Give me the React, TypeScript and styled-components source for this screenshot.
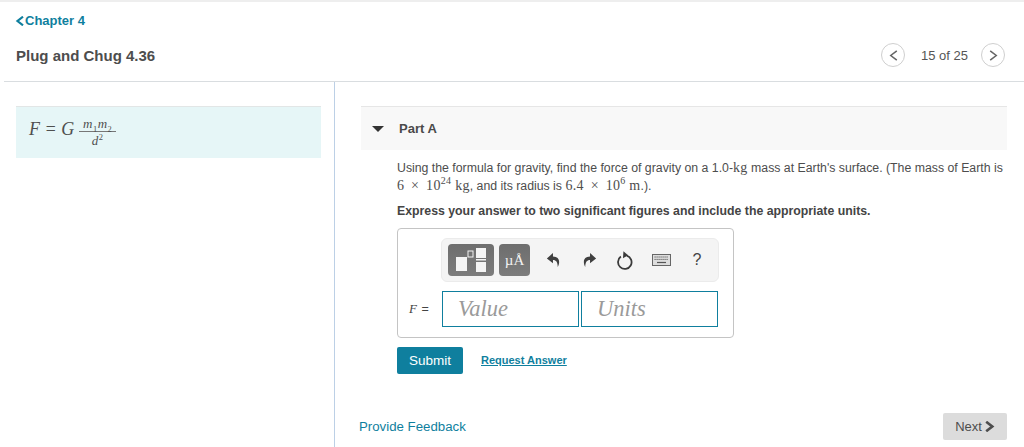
import React from "react";
import styled, { createGlobalStyle } from "styled-components";

const Global = createGlobalStyle`
  html, body { margin: 0; padding: 0; background: #fff; }
  body { font-family: "Liberation Sans", Arial, sans-serif; color: #4a4a4a; }
`;

const Page = styled.div`
  width: 1024px;
  height: 447px;
  overflow: hidden;
  display: flex;
  flex-direction: column;
  border-top: 2px solid #eeeeee;
  box-sizing: border-box;
`;

const Header = styled.header`
  height: 80px;
  margin-left: 4px;
  padding: 12px 0 0 12px;
  box-sizing: border-box;
  border-bottom: 1px solid #d9dde0;
  display: flex;
  flex-direction: column;
  flex: none;
`;

const BackLink = styled.a`
  display: flex;
  align-items: center;
  height: 14px;
  margin-left: -1px;
  color: #0f7f9e;
  font-size: 13px;
  font-weight: 700;
  line-height: 14px;
`;

const TitleRow = styled.div`
  display: flex;
  align-items: center;
  justify-content: space-between;
  margin-top: 9px;
  height: 36px;
`;

const Title = styled.h1`
  margin: 0;
  font-size: 15px;
  font-weight: 700;
  color: #4d4d4d;
`;

const Pager = styled.div`
  display: flex;
  align-items: center;
  margin-right: 19px;
  font-size: 13px;
  color: #555;
`;

const PageCount = styled.span`
  margin: 0 13px 0 16px;
`;

const RoundButton = styled.span`
  width: 24px;
  height: 24px;
  box-sizing: border-box;
  border: 1px solid #cfcfcf;
  border-radius: 50%;
  display: flex;
  align-items: center;
  justify-content: center;
`;

const Body = styled.main`
  flex: 1;
  display: grid;
  grid-template-columns: 335px 1fr;
  min-height: 0;
`;

const Side = styled.aside`
  border-right: 1px solid #bcd0e6;
  padding: 24px 13px 0 16px;
`;

const Formula = styled.div`
  height: 52px;
  box-sizing: border-box;
  background: #e6f6f7;
  border-top: 1px solid #e2e6e6;
  padding: 10px 0 0 13px;
  display: flex;
  align-items: flex-start;
  font-family: "Liberation Serif", serif;
  font-style: italic;
  font-size: 18px;
  color: #4f4f4f;
`;

const FormulaText = styled.span`
  margin-top: 2px;
  white-space: pre;
`;

const Fraction = styled.span`
  display: inline-flex;
  flex-direction: column;
  align-items: center;
  margin-left: 5px;
  font-size: 13px;
  line-height: 12px;
  letter-spacing: 0.5px;
`;

const Numerator = styled.span`
  border-bottom: 1px solid #777;
  padding: 1px 0 1px;
  width: 37px;
  text-align: center;
  white-space: nowrap;
`;

const Denominator = styled.span`
  margin-top: 3px;
`;

const Sub = styled.sub`
  font-size: 8.5px;
  font-style: normal;
  line-height: 0;
`;

const Sup = styled.sup`
  font-size: 8.5px;
  font-style: normal;
  line-height: 0;
`;

const Content = styled.section`
  padding: 24px 17px 7px 26px;
  display: flex;
  flex-direction: column;
  min-width: 0;
`;

const PartHeader = styled.div`
  height: 44px;
  box-sizing: border-box;
  background: #f8f8f8;
  border-top: 1px solid #e6e6e6;
  display: flex;
  align-items: center;
  padding-left: 11px;
  gap: 15px;
  font-size: 13px;
  font-weight: 700;
  color: #4a4a4a;
`;

const Triangle = styled.span`
  width: 0;
  height: 0;
  border-left: 6px solid transparent;
  border-right: 6px solid transparent;
  border-top: 6px solid #333;
`;

const PartBody = styled.div`
  padding: 9px 0 0 36px;
  flex: 1;
  display: flex;
  flex-direction: column;
`;

const Prompt = styled.p`
  margin: 0;
  font-size: 12.3px;
  line-height: 18px;
  color: #4d4d4d;
  white-space: nowrap;
`;

const M = styled.span`
  font-family: "Liberation Serif", serif;
  font-size: 14px;
  letter-spacing: 0.3px;
`;

const MOp = styled.span`
  margin: 0 3px;
`;

const MSup = styled.sup`
  font-size: 10px;
  line-height: 0;
`;

const Instruction = styled.p`
  margin: 8px 0 0;
  font-size: 12.3px;
  line-height: 16px;
  font-weight: 700;
  color: #444;
`;

const AnswerBox = styled.div`
  margin-top: 9px;
  width: 337px;
  height: 110px;
  box-sizing: border-box;
  border: 1px solid #c4c4c4;
  border-radius: 4px;
  padding: 9px 0 0 43px;
`;

const Toolbar = styled.div`
  height: 44px;
  width: 278px;
  box-sizing: border-box;
  background: #f4f4f4;
  border: 1px solid #ebebeb;
  border-radius: 6px;
  display: flex;
  align-items: center;
  padding-left: 6px;
`;

const ToolButton = styled.span<{ $w: number }>`
  width: ${(p) => p.$w}px;
  height: 32px;
  margin-right: 5px;
  border-radius: 4px;
  background: linear-gradient(#6e6e6e, #7c7c7c);
  flex: none;
  display: flex;
  align-items: center;
  justify-content: center;
  color: #f2f2f2;
  font-family: "Liberation Serif", serif;
  font-size: 15px;
`;

const ToolIcon = styled.span`
  width: 36px;
  height: 32px;
  flex: none;
  display: flex;
  align-items: center;
  justify-content: center;
  color: #444;
  font-size: 16px;
`;

const InputRow = styled.div`
  display: flex;
  align-items: center;
  margin: 9px 0 0 -33px;
`;

const InputLabel = styled.span`
  width: 33px;
  padding-left: 1px;
  flex: none;
  font-size: 12.5px;
  word-spacing: 1px;
  color: #444;
  white-space: pre;
`;

const LabelVar = styled.i`
  font-family: "Liberation Serif", serif;
  font-size: 13px;
`;

const Field = styled.div`
  width: 137px;
  flex: none;
  height: 36px;
  box-sizing: border-box;
  border: 1px solid #0f7f9e;
  margin-right: 2px;
  padding-left: 15px;
  display: flex;
  align-items: center;
  font-family: "Liberation Serif", serif;
  font-style: italic;
  font-size: 22.5px;
  color: #9a9a9a;
`;

const Actions = styled.div`
  display: flex;
  align-items: center;
  margin-top: 9px;
  gap: 18px;
`;

const Submit = styled.button`
  width: 66px;
  height: 27px;
  border: 0;
  padding: 0;
  border-radius: 2px;
  background: #0f7f9e;
  color: #fff;
  font-family: inherit;
  font-size: 13.5px;
`;

const RequestLink = styled.a`
  color: #0f7f9e;
  font-size: 11px;
  font-weight: 700;
  text-decoration: underline;
  margin-top: -2px;
`;

const Footer = styled.div`
  display: flex;
  align-items: center;
  justify-content: space-between;
`;

const Feedback = styled.a`
  color: #0f7f9e;
  font-size: 13.25px;
  margin-left: -2px;
`;

const NextButton = styled.span`
  width: 64px;
  height: 27px;
  border-radius: 2px;
  background: #dcdcdc;
  color: #4d4d4d;
  font-size: 13px;
  display: flex;
  align-items: center;
  justify-content: center;
  gap: 2px;
`;

const Chevron = ({ dir, color, size = 10, width = 2 }: { dir: "l" | "r"; color: string; size?: number; width?: number }) => (
  <svg width={size} height={size} viewBox="0 0 10 10" fill="none" stroke={color} strokeWidth={width}>
    <path d={dir === "l" ? "M8 0.7 L2.5 5 L8 9.3" : "M2 0.7 L7.5 5 L2 9.3"} />
  </svg>
);

export default function App() {
  return (
    <Page>
      <Global />
      <Header>
        <BackLink>
          <Chevron dir="l" color="#0f7f9e" size={10} width={2.2} />
          Chapter 4
        </BackLink>
        <TitleRow>
          <Title>Plug and Chug 4.36</Title>
          <Pager>
            <RoundButton><Chevron dir="l" color="#666" size={11} width={1.4} /></RoundButton>
            <PageCount>15 of 25</PageCount>
            <RoundButton><Chevron dir="r" color="#666" size={11} width={1.4} /></RoundButton>
          </Pager>
        </TitleRow>
      </Header>
      <Body>
        <Side>
          <Formula>
            <FormulaText>F = G</FormulaText>
            <Fraction>
              <Numerator>m<Sub>1</Sub>m<Sub>2</Sub></Numerator>
              <Denominator>d<Sup>2</Sup></Denominator>
            </Fraction>
          </Formula>
        </Side>
        <Content>
          <PartHeader><Triangle />Part A</PartHeader>
          <PartBody>
            <Prompt>
              Using the formula for gravity, find the force of gravity on a 1.0-<M>kg</M> mass at Earth's surface. (The mass of Earth is
              <br />
              <M>6<MOp> × </MOp>10<MSup>24</MSup> kg</M>, and its radius is <M>6.4<MOp> × </MOp>10<MSup>6</MSup> m</M>.).
            </Prompt>
            <Instruction>Express your answer to two significant figures and include the appropriate units.</Instruction>
            <AnswerBox>
              <Toolbar>
                <ToolButton $w={46}>
                  <svg width="34" height="28" viewBox="0 0 34 28" fill="#f4f4f4">
                    <rect x="2" y="11" width="11" height="14" />
                    <rect x="14" y="5" width="5" height="6" fill="none" stroke="#f4f4f4" strokeWidth="1" />
                    <rect x="22" y="2" width="10" height="10" />
                    <rect x="22" y="13" width="10" height="1.5" />
                    <rect x="22" y="16" width="10" height="10" />
                  </svg>
                </ToolButton>
                <ToolButton $w={31}>µÅ</ToolButton>
                <ToolIcon>
                  <svg width="15" height="16" viewBox="0 0 14 15" fill="#3f3f3f">
                    <path d="M6.5 1 L0.8 6 L6.5 10.5 V7.6 C9.5 7.6 10.8 9.5 11 14 C13.5 9 12.5 4.4 6.5 4.2 Z" />
                  </svg>
                </ToolIcon>
                <ToolIcon>
                  <svg width="15" height="16" viewBox="0 0 14 15" fill="#3f3f3f">
                    <path d="M7.5 1 L13.2 6 L7.5 10.5 V7.6 C4.5 7.6 3.2 9.5 3 14 C0.5 9 1.5 4.4 7.5 4.2 Z" />
                  </svg>
                </ToolIcon>
                <ToolIcon>
                  <svg width="18" height="19" viewBox="0 0 17 18" fill="none" stroke="#3a3a3a" strokeWidth="1.7">
                    <path d="M10.2 4.4 A6.4 6.4 0 1 1 4.6 5.3" />
                    <path d="M7 0.3 L11.4 4 L6.6 6.8 Z" fill="#3a3a3a" stroke="none" />
                  </svg>
                </ToolIcon>
                <ToolIcon>
                  <svg width="19" height="12" viewBox="0 0 19 12">
                    <rect x="0.5" y="0.5" width="18" height="11" fill="#ddd" stroke="#666" />
                    <path d="M2.5 3h14M2.5 5.4h14" stroke="#555" strokeWidth="1" strokeDasharray="1.2 0.8" />
                    <path d="M5 8.5h9" stroke="#555" strokeWidth="1.2" />
                  </svg>
                </ToolIcon>
                <ToolIcon>?</ToolIcon>
              </Toolbar>
              <InputRow>
                <InputLabel><LabelVar>F</LabelVar> =</InputLabel>
                <Field>Value</Field>
                <Field>Units</Field>
              </InputRow>
            </AnswerBox>
            <Actions>
              <Submit>Submit</Submit>
              <RequestLink>Request Answer</RequestLink>
            </Actions>
          </PartBody>
          <Footer>
            <Feedback>Provide Feedback</Feedback>
            <NextButton>Next<Chevron dir="r" color="#4d4d4d" size={11} width={2.4} /></NextButton>
          </Footer>
        </Content>
      </Body>
    </Page>
  );
}
